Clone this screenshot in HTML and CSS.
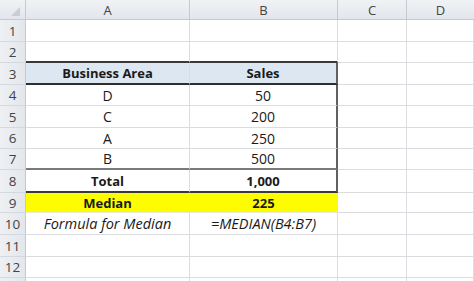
FILE: index.html
```html
<!DOCTYPE html>
<html lang="en">
<head>
  <meta charset="UTF-8" />
  <title>Median</title>
  <link rel="stylesheet" href="styles.css">
</head>
<body>
  <div class="sheet">
    <div class="corner"><span class="tri"></span></div>
    <div class="col-head">A</div>
    <div class="col-head">B</div>
    <div class="col-head">C</div>
    <div class="col-head last">D</div>

    <div class="row-head">1</div><div class="cell"></div><div class="cell"></div><div class="cell"></div><div class="cell"></div>
    <div class="row-head">2</div><div class="cell top-edge"></div><div class="cell top-edge"></div><div class="cell"></div><div class="cell"></div>

    <div class="row-head">3</div>
    <div class="cell head-cell bold">Business Area</div>
    <div class="cell head-cell bold edge-right">Sales</div>
    <div class="cell"></div><div class="cell"></div>

    <div class="row-head">4</div><div class="cell">D</div><div class="cell edge-right">50</div><div class="cell"></div><div class="cell"></div>
    <div class="row-head">5</div><div class="cell">C</div><div class="cell edge-right">200</div><div class="cell"></div><div class="cell"></div>
    <div class="row-head">6</div><div class="cell">A</div><div class="cell edge-right">250</div><div class="cell"></div><div class="cell"></div>
    <div class="row-head">7</div><div class="cell sep">B</div><div class="cell sep edge-right">500</div><div class="cell"></div><div class="cell"></div>

    <div class="row-head">8</div>
    <div class="cell bold end">Total</div>
    <div class="cell bold end edge-right">1,000</div>
    <div class="cell"></div><div class="cell"></div>

    <div class="row-head">9</div>
    <div class="cell bold yellow">Median</div>
    <div class="cell bold yellow">225</div>
    <div class="cell"></div><div class="cell"></div>

    <div class="row-head">10</div>
    <div class="cell italic">Formula for Median</div>
    <div class="cell italic">=MEDIAN(B4:B7)</div>
    <div class="cell"></div><div class="cell"></div>

    <div class="row-head">11</div><div class="cell"></div><div class="cell"></div><div class="cell"></div><div class="cell"></div>
    <div class="row-head">12</div><div class="cell"></div><div class="cell"></div><div class="cell"></div><div class="cell"></div>
    <div class="row-head"></div><div class="cell"></div><div class="cell"></div><div class="cell"></div><div class="cell"></div>
  </div>
</body>
</html>
```
FILE: styles.css
```css
body, html {
  margin: 0;
  padding: 0;
  background: white;
  font-family: "Open Sans", "Liberation Sans", sans-serif;
  overflow: hidden;
}

.sheet {
  display: grid;
  grid-template-columns: 26px 164px 148px 69px 67px;
  grid-template-rows: 20px 22px 21px 22px 21px 22px 21px 21px 23px 20px 22px 22px 21px 8px;
  width: 474px;
  height: 281px;
  font-size: 14px;
  color: #1a1a1a;
}

.sheet > div {
  box-sizing: border-box;
  display: flex;
  align-items: center;
  justify-content: center;
}

.corner,
.col-head,
.row-head {
  background: linear-gradient(#f0f2f5, #e2e6ec);
  color: #444;
  border-right: 1px solid #c5cad2;
  border-bottom: 1px solid #c5cad2;
}

.corner {
  position: relative;
}

.corner .tri {
  position: absolute;
  right: 5px;
  bottom: 3px;
  width: 0;
  height: 0;
  border-left: 9px solid transparent;
  border-bottom: 9px solid #c9ced6;
}

.col-head {
  font-size: 13px;
}

.col-head.last {
  border-right: none;
}

.row-head {
  font-size: 13.5px;
  background: linear-gradient(90deg, #eef0f3, #e3e7ec);
  border-bottom-color: #d5d9df;
}

.cell {
  border-right: 1px solid #dadcdf;
  border-bottom: 1px solid #dadcdf;
}

.top-edge {
  border-bottom: 2px solid #3a3a3a;
}

.head-cell {
  background: #dde7f2;
  border-bottom: 2px solid #2e2e2e;
}

.edge-right {
  border-right: 2px solid #606060;
}

.sep {
  border-bottom: 2px solid #7a7a7a;
}

.end {
  border-bottom: 2px solid #3a3a3a;
}

.yellow {
  background: #fdfd00;
  border-right-color: #fdfd00;
  border-bottom-color: #e9e9cf;
}

.bold {
  font-size: 13px;
  font-weight: bold;
}

.italic {
  font-size: 14.5px;
  font-style: italic;
}
```
